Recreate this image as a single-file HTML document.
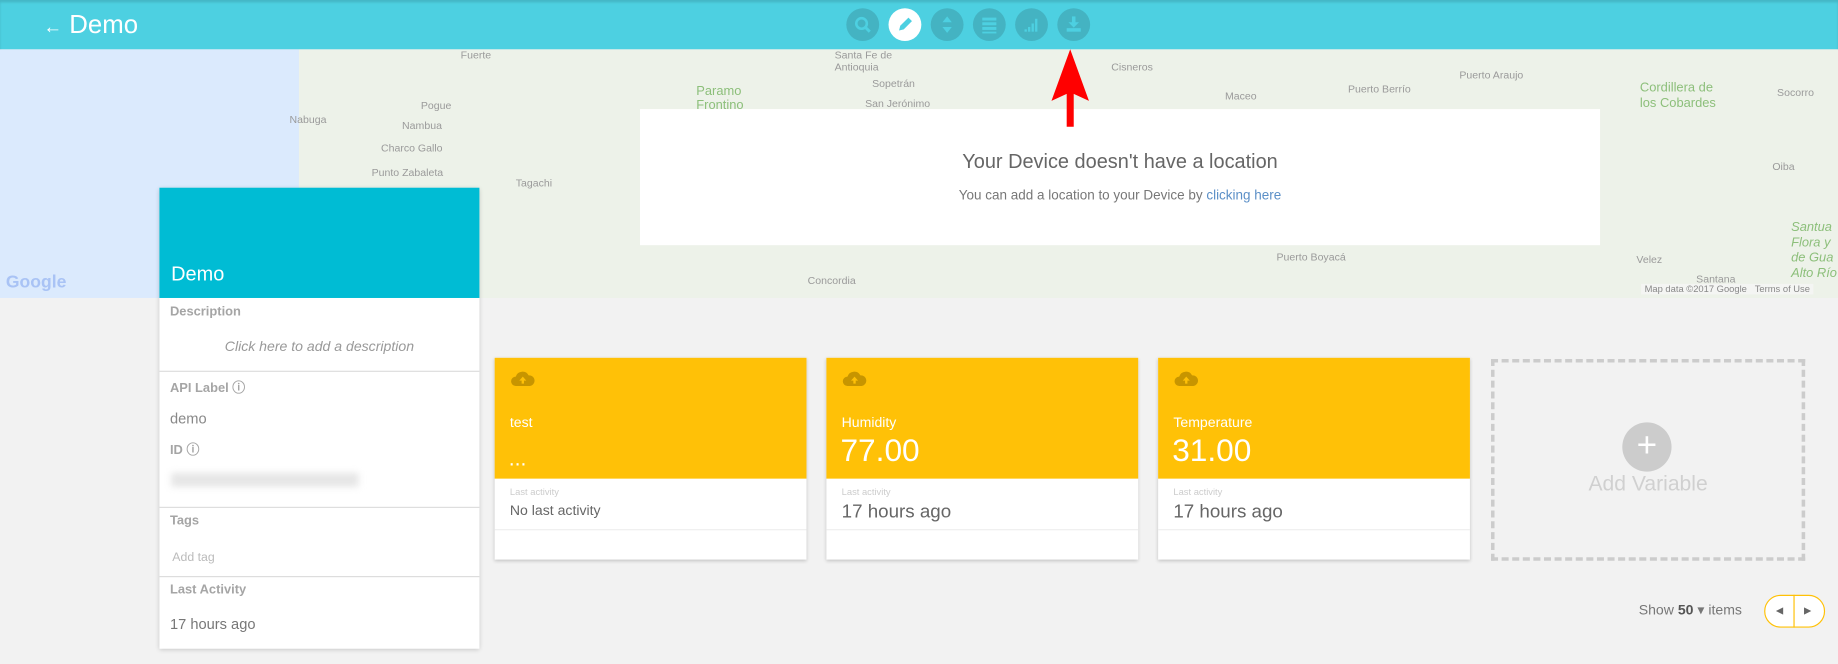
<!DOCTYPE html>
<html><head><meta charset="utf-8"><style>
html,body{margin:0;padding:0;width:1838px;height:664px;overflow:hidden;background:#f2f2f2;font-family:"Liberation Sans",sans-serif;}
#w{position:absolute;left:0;top:0;width:1568px;height:566px;transform:scale(1.17219,1.17314);transform-origin:0 0;background:#f2f2f2;}
.a{position:absolute}
.hdr{left:0;top:0;width:1568px;height:42px;background:#4dd0e1;box-shadow:inset 0 2px 2px rgba(0,0,0,.12);}
.ic{position:absolute;top:7px;width:28px;height:28px;border-radius:50%;background:#44b3c2;}
.map{left:0;top:42px;width:1568px;height:212px;background:#edf2e9;overflow:hidden}
.ml{position:absolute;font-size:9px;color:#9a9a9a;white-space:nowrap}
.card{background:#fff;box-shadow:0 1px 4px rgba(0,0,0,.2);}
.lab{font-size:11px;font-weight:bold;color:#a5a5a5;}
.sep{position:absolute;left:0;width:273px;height:1px;background:#ddd}
.var{position:absolute;top:305px;width:266px;height:172px;background:#fff;box-shadow:0 1px 3px rgba(0,0,0,.2)}
.var .y{position:absolute;left:0;top:0;width:266px;height:103px;background:#ffc107}
.var .n{position:absolute;left:13px;top:48px;color:#fff;font-size:12px}
.var .v{position:absolute;left:12px;top:64px;color:#fff;font-size:27px}
.var .la{position:absolute;left:13px;top:110px;color:#ccc;font-size:8px}
.var .t{position:absolute;left:13px;top:123px;color:#666;font-size:16px}
.var .d{position:absolute;left:0;top:146px;width:266px;height:1px;background:#eee}
</style></head><body><div id="w">
<div class="a map">
  <div class="a" style="left:0;top:0;width:255px;height:212px;background:#dbeafd"></div>
  <div class="a" style="left:225px;top:140px;width:50px;height:72px;background:#dbeafd;border-radius:0 20px 0 0"></div>
  <div class="ml" style="left:393px;top:0">Fuerte</div>
  <div class="ml" style="left:359px;top:43px">Pogue</div>
  <div class="ml" style="left:247px;top:55px">Nabuga</div>
  <div class="ml" style="left:343px;top:60px">Nambua</div>
  <div class="ml" style="left:325px;top:79px">Charco Gallo</div>
  <div class="ml" style="left:317px;top:100px">Punto Zabaleta</div>
  <div class="ml" style="left:440px;top:109px">Tagachi</div>
  <div class="ml" style="left:712px;top:0">Santa Fe de<br>Antioquia</div>
  <div class="ml" style="left:744px;top:24px">Sopetrán</div>
  <div class="ml" style="left:738px;top:41px">San Jerónimo</div>
  <div class="ml" style="left:594px;top:30px;color:#8cbf7a;font-size:11px">Paramo<br>Frontino</div>
  <div class="ml" style="left:948px;top:10px">Cisneros</div>
  <div class="ml" style="left:1045px;top:35px">Maceo</div>
  <div class="ml" style="left:1245px;top:17px">Puerto Araujo</div>
  <div class="ml" style="left:1150px;top:29px">Puerto Berrío</div>
  <div class="ml" style="left:1399px;top:27px;color:#8cbf7a;font-size:11px;line-height:13px">Cordillera de<br>los Cobardes</div>
  <div class="ml" style="left:1516px;top:32px">Socorro</div>
  <div class="ml" style="left:1512px;top:95px">Oiba</div>
  <div class="ml" style="left:1447px;top:191px">Santana</div>
  <div class="ml" style="left:1396px;top:174px">Velez</div>
  <div class="ml" style="left:1528px;top:146px;color:#8cbf7a;font-size:11px;font-style:italic;line-height:13px">Santua<br>Flora y<br>de Gua<br>Alto Río</div>
  <div class="ml" style="left:689px;top:192px">Concordia</div>
  <div class="ml" style="left:681px;top:212px">Salgar</div>
  <div class="ml" style="left:1089px;top:172px">Puerto Boyacá</div>
  <div class="ml" style="left:5px;top:190px;font-size:15px;font-weight:bold;color:#a9c3f5">Google</div>
  <div class="ml" style="left:1400px;top:200px;font-size:8px;background:rgba(245,245,245,.8);padding:0 3px;color:#888">Map data ©2017 Google&nbsp;&nbsp;&nbsp;Terms of Use</div>
</div>
<div class="a" style="left:546px;top:93px;width:819px;height:116px;background:#fff"></div>
<div class="a" style="left:546px;top:128px;width:819px;text-align:center;font-size:17px;color:#666">Your Device doesn't have a location</div>
<div class="a" style="left:546px;top:161px;width:819px;text-align:center;font-size:11.5px;color:#777">You can add a location to your Device by <span style="color:#5b8fc7">clicking here</span></div>

<div class="a hdr"></div>
<div class="a" style="left:37px;top:8px;color:#fff;font-size:22px"><span style="font-size:16px;font-weight:bold">&#x2190;</span> Demo</div>
<div class="ic" style="left:722px"><svg width="28" height="28"><circle cx="13" cy="13" r="4.5" fill="none" stroke="#4dd0e1" stroke-width="2.2"/><line x1="16" y1="16" x2="20" y2="20" stroke="#4dd0e1" stroke-width="2.5"/></svg></div>
<div class="ic" style="left:758px;background:#fff"><svg width="28" height="28"><path d="M9 19 L10 15 L17 8 L20 11 L13 18 Z" fill="#4dd0e1"/></svg></div>
<div class="ic" style="left:794px"><svg width="28" height="28"><path d="M10 12 L14 7 L18 12Z M10 16 L14 21 L18 16Z" fill="#4dd0e1"/></svg></div>
<div class="ic" style="left:830px"><svg width="28" height="28" fill="#4dd0e1"><rect x="8" y="8" width="12" height="2.5"/><rect x="8" y="12" width="12" height="2.5"/><rect x="8" y="16" width="12" height="2.5"/><rect x="8" y="20" width="12" height="1.5"/></svg></div>
<div class="ic" style="left:866px"><svg width="28" height="28" fill="#4dd0e1"><rect x="8" y="18" width="2" height="2"/><rect x="11" y="16" width="2" height="4"/><rect x="14" y="13" width="2" height="7"/><rect x="17" y="9" width="2" height="11"/></svg></div>
<div class="ic" style="left:902px"><svg width="28" height="28" fill="#4dd0e1"><rect x="12.5" y="7" width="3" height="6"/><path d="M9.5 12 L18.5 12 L14 16.5Z"/><rect x="8" y="17" width="12" height="3"/></svg></div>
<svg class="a" style="left:895px;top:40px" width="36" height="70"><path d="M18 2 L34 46 L21 40 L21 68 L15 68 L15 40 L2 46 Z" fill="#f00"/></svg>

<div class="a card" style="left:136px;top:160px;width:273px;height:393px"></div>
<div class="a" style="left:136px;top:160px;width:273px;height:94px;background:#00bcd4"></div>
<div class="a" style="left:146px;top:224px;color:#fff;font-size:17px">Demo</div>
<div class="a" style="left:136px;top:254px;width:273px;height:299px">
  <div class="a lab" style="left:9px;top:6px">Description</div>
  <div class="a" style="left:0;top:34px;width:273px;text-align:center;font-size:12px;font-style:italic;color:#999">Click here to add a description</div>
  <div class="sep" style="top:62px"></div>
  <div class="a lab" style="left:9px;top:68px">API Label &#9432;</div>
  <div class="a" style="left:9px;top:96px;font-size:12.5px;color:#888">demo</div>
  <div class="a lab" style="left:9px;top:121px">ID &#9432;</div>
  <div class="a" style="left:10px;top:149px;width:160px;height:12px;background:#e6e6e6;filter:blur(3px)"></div>
  <div class="sep" style="top:178px"></div>
  <div class="a lab" style="left:9px;top:184px">Tags</div>
  <div class="a" style="left:11px;top:215px;font-size:10.5px;color:#bbb">Add tag</div>
  <div class="sep" style="top:237px"></div>
  <div class="a lab" style="left:9px;top:243px">Last Activity</div>
  <div class="a" style="left:9px;top:271px;font-size:12.5px;color:#777">17 hours ago</div>
</div>

<div class="var" style="left:422px"><div class="y"></div><svg class="a" style="left:13px;top:10px" width="22" height="16"><path d="M5 14 A4 4 0 0 1 5 6 A6 6 0 0 1 16 5 A4.5 4.5 0 0 1 17 14 Z" fill="#c79500"/><path d="M11 6 L14 9.5 L12 9.5 L12 12 L10 12 L10 9.5 L8 9.5Z" fill="#ffc107"/></svg><div class="n">test</div><div class="v" style="font-size:18px;top:76px">...</div><div class="la">Last activity</div><div class="t" style="font-size:12px">No last activity</div><div class="d"></div></div>
<div class="var" style="left:705px"><div class="y"></div><svg class="a" style="left:13px;top:10px" width="22" height="16"><path d="M5 14 A4 4 0 0 1 5 6 A6 6 0 0 1 16 5 A4.5 4.5 0 0 1 17 14 Z" fill="#c79500"/><path d="M11 6 L14 9.5 L12 9.5 L12 12 L10 12 L10 9.5 L8 9.5Z" fill="#ffc107"/></svg><div class="n">Humidity</div><div class="v">77.00</div><div class="la">Last activity</div><div class="t">17 hours ago</div><div class="d"></div></div>
<div class="var" style="left:988px"><div class="y"></div><svg class="a" style="left:13px;top:10px" width="22" height="16"><path d="M5 14 A4 4 0 0 1 5 6 A6 6 0 0 1 16 5 A4.5 4.5 0 0 1 17 14 Z" fill="#c79500"/><path d="M11 6 L14 9.5 L12 9.5 L12 12 L10 12 L10 9.5 L8 9.5Z" fill="#ffc107"/></svg><div class="n">Temperature</div><div class="v">31.00</div><div class="la">Last activity</div><div class="t">17 hours ago</div><div class="d"></div></div>

<div class="a" style="left:1272px;top:306px;width:262px;height:166px;border:3px dashed #ccc"></div>
<div class="a" style="left:1384px;top:360px;width:42px;height:42px;border-radius:50%;background:#ccc;color:#fff;font-size:30px;line-height:40px;text-align:center;font-weight:100">+</div>
<div class="a" style="left:1272px;top:402px;width:268px;text-align:center;font-size:18px;color:#d0d0d0">Add Variable</div>

<div class="a" style="left:1398px;top:513px;font-size:12px;color:#777">Show <b style="color:#555">50</b> &#9662; items</div>
<div class="a" style="left:1505px;top:507px;width:50px;height:26px;border:1px solid #ffc107;border-radius:14px;background:#fff"></div>
<div class="a" style="left:1530px;top:507px;width:1px;height:28px;background:#ffc107"></div>
<div class="a" style="left:1515px;top:516px;font-size:8px;color:#666">&#9664;</div>
<div class="a" style="left:1539px;top:516px;font-size:8px;color:#666">&#9654;</div>
</div></body></html>
